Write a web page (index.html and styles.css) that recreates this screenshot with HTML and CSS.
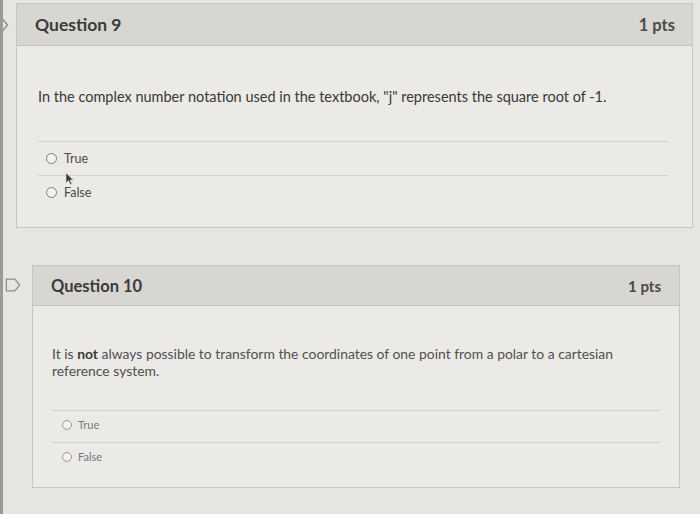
FILE: index.html
```html
<!DOCTYPE html>
<html>
<head>
<meta charset="utf-8">
<link rel="stylesheet" href="styles.css">
</head>
<body>
<div class="page">
  <div class="question q9">
    <svg class="flag" width="18" height="16" viewBox="0 0 18 16"><path d="M1.5 1.5 H11 L16.5 8 L11 14.5 H1.5 Z" fill="none" stroke="#8e8d8a" stroke-width="1.4" stroke-linejoin="round"/></svg>
    <div class="card">
      <div class="card-head">
        <span class="title">Question 9</span>
        <span class="pts">1 pts</span>
      </div>
      <div class="card-body">
        <p class="qtext">In the complex number notation used in the textbook, "j" represents the square root of -1.</p>
        <div class="answers">
          <div class="answer"><span class="radio"></span><span>True</span></div>
          <div class="answer"><span class="radio"></span><span>False</span></div>
          <svg class="cursor" width="10" height="14" viewBox="0 0 10 14"><path d="M1 1 L1 11 L3.5 8.6 L5.3 12.6 L6.8 11.9 L5 8 L8.4 8 Z" fill="#3a3a3a" stroke="#d8d8d6" stroke-width="0.6"/></svg>
        </div>
      </div>
    </div>
  </div>

  <div class="question q10">
    <svg class="flag" width="16" height="16" viewBox="0 0 18 16"><path d="M1.5 1.5 H11 L16.5 8 L11 14.5 H1.5 Z" fill="none" stroke="#8e8d8a" stroke-width="1.4" stroke-linejoin="round"/></svg>
    <div class="card">
      <div class="card-head">
        <span class="title">Question 10</span>
        <span class="pts">1 pts</span>
      </div>
      <div class="card-body">
        <p class="qtext">It is <strong>not</strong> always possible to transform the coordinates of one point from a polar to a cartesian reference system.</p>
        <div class="answers">
          <div class="answer"><span class="radio"></span><span>True</span></div>
          <div class="answer"><span class="radio"></span><span>False</span></div>
        </div>
      </div>
    </div>
  </div>
</div>
</body>
</html>
```

FILE: styles.css
```css
html, body {
  margin: 0;
  padding: 0;
}
body {
  background: #e6e5e1;
  font-family: Lato, "Open Sans", "Liberation Sans", sans-serif;
  color: #3a3a3a;
  width: 700px;
  height: 514px;
  overflow: hidden;
  border-left: 3px solid #9c9a95;
  box-sizing: border-box;
}
.page {
  display: flex;
  flex-direction: column;
  padding-top: 3px;
}
.question {
  display: flex;
  align-items: flex-start;
  position: relative;
}
.flag {
  flex: none;
}
.q9 {
  margin-left: -12px;
  gap: 7px;
}
.q9 .flag {
  margin-top: 14px;
}
.q10 {
  margin-top: 37px;
  margin-left: 2px;
  gap: 11px;
}
.q10 .flag {
  margin-top: 12px;
}
.card {
  border: 1px solid #c6c5c1;
  background: #ebeae7;
  box-sizing: border-box;
}
.q9 .card {
  width: 677px;
}
.q10 .card {
  width: 648px;
}
.card-head {
  background: #d7d6d3;
  border-bottom: 1px solid #c2c1bd;
  display: flex;
  align-items: center;
  justify-content: space-between;
  box-sizing: border-box;
}
.q9 .card-head {
  height: 42px;
  padding: 0 17px 0 18px;
}
.q10 .card-head {
  height: 40px;
  padding: 0 18px 0 18px;
}
.title {
  font-weight: 700;
  color: #3b3b3b;
}
.q9 .title {
  font-size: 17.5px;
}
.q10 .title {
  font-size: 16.5px;
}
.pts {
  font-weight: 700;
  color: #4a4a4a;
}
.q9 .pts {
  font-size: 16.5px;
}
.q10 .pts {
  font-size: 15px;
}
.qtext {
  margin: 0;
}
.q9 .card-body {
  padding: 41px 24px 18px 21px;
}
.q9 .qtext {
  font-size: 14.5px;
  line-height: 20px;
  color: #383838;
}
.q10 .card-body {
  padding: 39px 19px 13px 19px;
}
.q10 .qtext {
  font-size: 13.9px;
  line-height: 17px;
  color: #505050;
  width: 580px;
}
.q10 .qtext strong {
  font-weight: 700;
  color: #3a3a3a;
}
.answers {
  position: relative;
}
.q9 .answers {
  margin-top: 34px;
}
.q10 .answers {
  margin-top: 31px;
}
.answer {
  display: flex;
  align-items: center;
  border-top: 1px solid #d3d2ce;
  box-sizing: border-box;
}
.q9 .answer {
  height: 34px;
  padding-left: 8px;
  gap: 7px;
  font-size: 12.5px;
  color: #4a4a4a;
}
.q10 .answer {
  height: 32px;
  padding-left: 10px;
  padding-bottom: 4px;
  gap: 6px;
  font-size: 11px;
  color: #777;
}
.radio {
  display: inline-block;
  border-radius: 50%;
  background: #f2f2f0;
  box-sizing: border-box;
  flex: none;
}
.q9 .radio {
  width: 11px;
  height: 11px;
  border: 1.3px solid #7e7e7c;
}
.q10 .radio {
  width: 10px;
  height: 10px;
  border: 1.2px solid #9a9a98;
}
.cursor {
  position: absolute;
  left: 27px;
  top: 31px;
}
```
